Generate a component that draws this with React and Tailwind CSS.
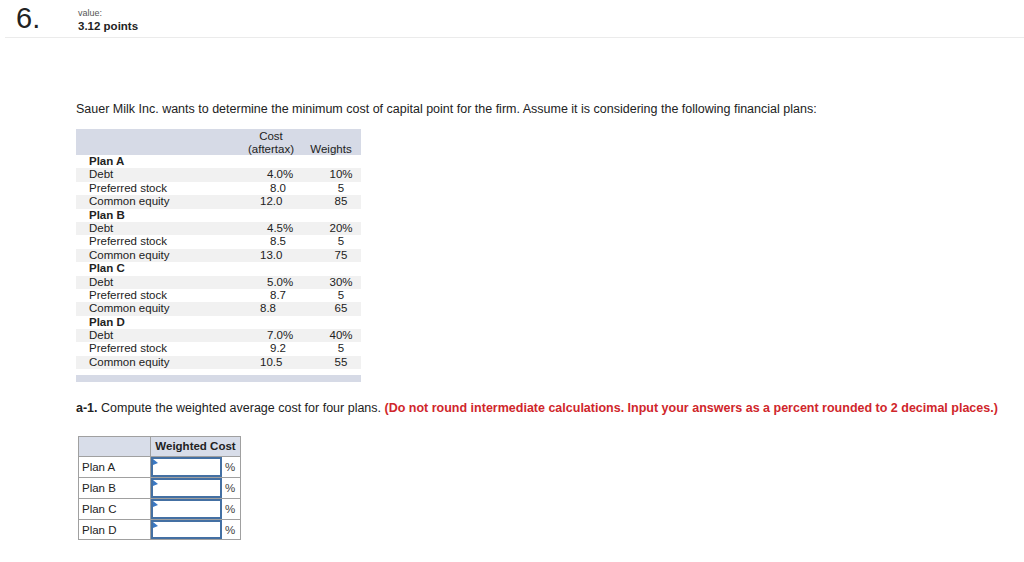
import React from 'react';

const plans = [
  {
    name: 'Plan A',
    rows: [
      ['Debt', '4.0%', '10%'],
      ['Preferred stock', '8.0', '5'],
      ['Common equity', '12.0', '85'],
    ],
  },
  {
    name: 'Plan B',
    rows: [
      ['Debt', '4.5%', '20%'],
      ['Preferred stock', '8.5', '5'],
      ['Common equity', '13.0', '75'],
    ],
  },
  {
    name: 'Plan C',
    rows: [
      ['Debt', '5.0%', '30%'],
      ['Preferred stock', '8.7', '5'],
      ['Common equity', '8.8', '65'],
    ],
  },
  {
    name: 'Plan D',
    rows: [
      ['Debt', '7.0%', '40%'],
      ['Preferred stock', '9.2', '5'],
      ['Common equity', '10.5', '55'],
    ],
  },
];

// cost column offsets follow the spreadsheet image (debt / preferred / common)
const costPad = ['pl-[26px]', 'pl-[29px]', 'pl-[19px]'];

function DataTable() {
  return (
    <div className="w-[285px] text-[11.5px] leading-[13.4px] text-[#222]">
      <div className="flex h-[26px] bg-[#d6dae6]">
        <div className="w-[165px]" />
        <div className="w-[60px] pt-[1px] text-center">
          Cost
          <br />
          (aftertax)
        </div>
        <div className="w-[60px] pt-[14px] text-center">Weights</div>
      </div>
      {plans.map((plan) => (
        <div key={plan.name}>
          <div className="flex h-[13.4px] bg-white pl-[13px] font-bold">{plan.name}</div>
          {plan.rows.map(([label, cost, weight], i) => (
            <div
              key={label}
              className={`flex h-[13.4px] ${i === 1 ? 'bg-white' : 'bg-[#f1f1f1]'}`}
            >
              <div className="w-[165px] pl-[13px]">{label}</div>
              <div className={`w-[60px] ${costPad[i]}`}>{cost}</div>
              <div className="w-[60px] pl-[20px] text-center">{weight}</div>
            </div>
          ))}
        </div>
      ))}
      <div className="mt-[6px] h-[7px] bg-[#d6dae6]" />
    </div>
  );
}

function AnswerRow({ label }) {
  return (
    <div className="flex h-[20.75px] border-t border-[#a0a0a0]">
      <div className="w-[72px] border-r border-[#a0a0a0] pl-[3px] leading-[20px]">{label}</div>
      <div className="relative w-[72px] border-2 border-[#4470a3] bg-white">
        <div className="absolute left-0 top-0 h-0 w-0 border-l-[5px] border-t-[4px] border-b-[2px] border-l-[#3a78c4] border-t-transparent border-b-transparent" />
      </div>
      <div className="w-[18px] pl-[3px] leading-[20px] text-[#444]">%</div>
    </div>
  );
}

export default function App() {
  return (
    <div className="min-h-[562px] w-[1024px] bg-white font-['Liberation_Sans',Arial,sans-serif] text-[#222]">
      {/* question header */}
      <div className="ml-[5px] flex h-[38px] border-b border-[#ebebeb]">
        <div className="w-[73px] pl-[11px] pt-[1px] text-[29px] leading-[34px]">6.</div>
        <div className="pt-[8px]">
          <div className="text-[9px] leading-[11px] text-[#555]">value:</div>
          <div className="text-[11.5px] font-bold leading-[14px]">3.12 points</div>
        </div>
      </div>

      <div className="pl-[76px] pt-[63px]">
        <p className="whitespace-nowrap text-[12.5px] leading-[16px]">
          Sauer Milk Inc. wants to determine the minimum cost of capital point for the firm. Assume it is
          considering the following financial plans:
        </p>

        <div className="mt-[12px]">
          <DataTable />
        </div>

        <p className="mt-[18px] whitespace-nowrap text-[12.5px] leading-[16px]">
          <span className="font-bold">a-1.</span> Compute the weighted average cost for four plans.{' '}
          <span className="font-bold text-[#d0262b]">
            (Do not round intermediate calculations. Input your answers as a percent rounded to 2 decimal
            places.)
          </span>
        </p>

        <div className="ml-[2px] mt-[20px] w-[163px] border border-[#a0a0a0] text-[11.5px]">
          <div className="flex h-[19px] bg-[#d8dde9]">
            <div className="w-[72px] border-r border-[#a0a0a0]" />
            <div className="flex-1 text-center font-bold leading-[19px]">Weighted Cost</div>
          </div>
          {['Plan A', 'Plan B', 'Plan C', 'Plan D'].map((p) => (
            <AnswerRow key={p} label={p} />
          ))}
        </div>
      </div>
    </div>
  );
}
